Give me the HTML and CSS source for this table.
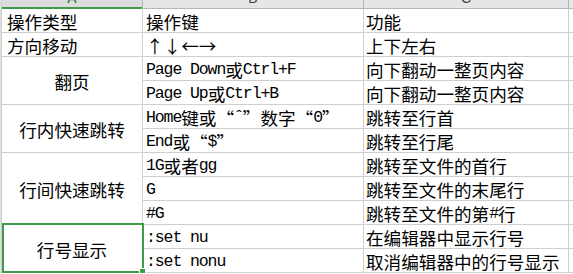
FILE: index.html
```html
<!DOCTYPE html>
<html lang="zh-CN">
<head>
<meta charset="utf-8">
<title>vi 操作</title>
<link rel="stylesheet" href="styles.css">
</head>
<body>
<div class="sheet">
  <div class="rowhead"></div>
  <div class="colhead sel"><span>A</span></div>
  <div class="colhead"><span>B</span></div>
  <div class="colhead"><span>C</span></div>
  <div class="colhead last"><span>D</span></div>

  <div class="c a">操作类型</div>
  <div class="c b">操作键</div>
  <div class="c k">功能</div>
  <div class="c d"></div>

  <div class="c a">方向移动</div>
  <div class="c b">↑↓←→</div>
  <div class="c k">上下左右</div>
  <div class="c d"></div>

  <div class="c a m span2">翻页</div>
  <div class="c b"><span class="en">Page Down</span>或<span class="en">Ctrl+F</span></div>
  <div class="c k">向下翻动一整页内容</div>
  <div class="c d"></div>
  <div class="c b"><span class="en">Page Up</span>或<span class="en">Ctrl+B</span></div>
  <div class="c k">向下翻动一整页内容</div>
  <div class="c d"></div>

  <div class="c a m span2">行内快速跳转</div>
  <div class="c b"><span class="en">Home</span>键或“<span class="en">ˆ</span>”数字“<span class="en">0</span>”</div>
  <div class="c k">跳转至行首</div>
  <div class="c d"></div>
  <div class="c b"><span class="en">End</span>或“<span class="en">$</span>”</div>
  <div class="c k">跳转至行尾</div>
  <div class="c d"></div>

  <div class="c a m span3">行间快速跳转</div>
  <div class="c b"><span class="en">1G</span>或者<span class="en">gg</span></div>
  <div class="c k">跳转至文件的首行</div>
  <div class="c d"></div>
  <div class="c b"><span class="en">G</span></div>
  <div class="c k">跳转至文件的末尾行</div>
  <div class="c d"></div>
  <div class="c b"><span class="en">#G</span></div>
  <div class="c k">跳转至文件的第<span class="en">#</span>行</div>
  <div class="c d"></div>

  <div class="c a m span2 selected">行号显示</div>
  <div class="c b"><span class="en">:set nu</span></div>
  <div class="c k">在编辑器中显示行号</div>
  <div class="c d"></div>
  <div class="c b"><span class="en">:set nonu</span></div>
  <div class="c k">取消编辑器中的行号显示</div>
  <div class="c d"></div>
</div>
</body>
</html>
```

FILE: styles.css
```css
html, body {
  margin: 0;
  padding: 0;
  background: #ffffff;
}

.sheet {
  display: grid;
  grid-template-columns: 1px 140px 220px 204px 1fr;
  grid-template-rows: 8px repeat(11, 23px);
  gap: 1px;
  padding-bottom: 1px;
  width: 573px;
  background: #cfcfcf;
  font-family: "Noto Sans CJK SC", "Noto Sans", sans-serif;
  color: #000;
}

.rowhead {
  grid-column: 1;
  grid-row: 1 / span 12;
  background: #dedede;
}

.colhead {
  background: #e6e6e6;
  display: flex;
  justify-content: center;
  align-items: flex-end;
  overflow: hidden;
  box-shadow: 1px 0 0 #b5b5b5, 0 1px 0 #b5b5b5, 1px 1px 0 #b5b5b5;
}

.colhead.sel {
  background: #dcdcdc;
  box-shadow: inset 0 -1px 0 #3f9b48, 0 1px 0 #3f9b48, 1px 0 0 #b5b5b5;
}

.colhead span {
  font-family: "Liberation Sans", sans-serif;
  font-size: 14px;
  line-height: 14px;
  margin-bottom: 3px;
  color: #444;
}

.colhead.sel span {
  color: #217346;
}

.colhead.last span {
  visibility: hidden;
}

.c {
  background: #fff;
  display: flex;
  align-items: center;
  padding-top: 3px;
  font-size: 17.6px;
  line-height: 20px;
  white-space: nowrap;
  box-sizing: border-box;
}

.c.a { padding-left: 5px; }
.c.b { padding-left: 3px; }
.c.k { padding-left: 2px; }
.c.d { padding: 0; }

.c.m {
  justify-content: center;
  padding-left: 0;
}

.span2 { grid-row: span 2; }
.span3 { grid-row: span 3; }

.en {
  font-family: "Liberation Mono", monospace;
  font-size: 16.5px;
  letter-spacing: -1.1px;
}

.c.selected {
  position: relative;
  z-index: 1;
}

.c.selected::after {
  content: "";
  position: absolute;
  top: -2px;
  left: 0;
  right: -2px;
  bottom: -1px;
  border: 2px solid #3f9b48;
}

.c.selected::before {
  content: "";
  position: absolute;
  right: -4px;
  bottom: -3px;
  width: 5px;
  height: 5px;
  background: #3f9b48;
  border: 1px solid #fff;
  z-index: 2;
}
```
